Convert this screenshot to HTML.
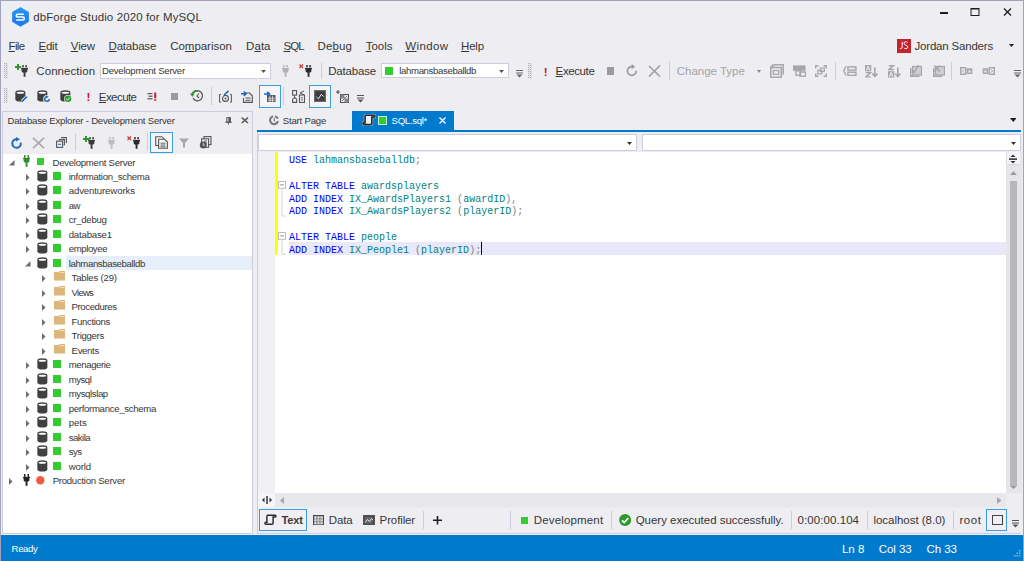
<!DOCTYPE html>
<html><head><meta charset="utf-8"><style>
html,body{margin:0;padding:0;}
body{width:1024px;height:561px;overflow:hidden;background:#EEEEF2;position:relative;font-family:'Liberation Sans',sans-serif;}
.a{position:absolute;display:block;}
.t{position:absolute;white-space:pre;line-height:20px;}
u{text-decoration:underline;text-underline-offset:1px;}
</style></head><body>
<div class="a" style="left:0px;top:0px;width:1024px;height:1px;background:#9FA3BF;"></div>
<div class="a" style="left:0px;top:0px;width:1px;height:561px;background:#9FA3BF;"></div>
<div class="a" style="left:1023px;top:0px;width:1px;height:561px;background:#9FA3BF;"></div>
<svg class="a" style="left:12px;top:7px;" width="18" height="20" viewBox="0 0 18 20"><defs><linearGradient id="lg" x1="0" y1="0" x2="0" y2="1"><stop offset="0" stop-color="#2A95F5"/><stop offset="1" stop-color="#1877EE"/></linearGradient></defs><path d="M8.5 0.6 L16.6 5.2 L16.6 14.6 L8.5 19.3 L0.4 14.6 L0.4 5.2 Z" fill="url(#lg)" stroke="url(#lg)" stroke-width="0.8" stroke-linejoin="round"/><path d="M12 7.3 H5.6 A1.4 1.4 0 0 0 5.6 10.1 H10.9 A1.45 1.45 0 0 1 10.9 13 H4.3" fill="none" stroke="#fff" stroke-width="1.5"/></svg>
<div class="t" style="left:33.20px;top:7px;font-size:11.5px;font-family:'Liberation Sans',sans-serif;color:#363636;letter-spacing:0.108px;">dbForge Studio 2020 for MySQL</div>
<div class="a" style="left:940px;top:12px;width:8px;height:2px;background:#1E1E1E;"></div>
<svg class="a" style="left:970px;top:7px;" width="10" height="10" viewBox="0 0 10 10"><rect x="1" y="1.5" width="8" height="7" fill="none" stroke="#1e1e1e" stroke-width="1"/><rect x="1" y="1" width="8" height="1.5" fill="#1e1e1e"/></svg>
<svg class="a" style="left:1003px;top:8px;" width="9" height="8" viewBox="0 0 9 8"><path d="M1 0.5 L8 7.5 M8 0.5 L1 7.5" stroke="#1e1e1e" stroke-width="1.3"/></svg>
<div class="t" style="left:8.50px;top:36px;font-size:11.5px;font-family:'Liberation Sans',sans-serif;color:#363636;letter-spacing:-0.642px;"><u>F</u>ile</div>
<div class="t" style="left:38.60px;top:36px;font-size:11.5px;font-family:'Liberation Sans',sans-serif;color:#363636;letter-spacing:-0.271px;"><u>E</u>dit</div>
<div class="t" style="left:70.80px;top:36px;font-size:11.5px;font-family:'Liberation Sans',sans-serif;color:#363636;letter-spacing:-0.116px;"><u>V</u>iew</div>
<div class="t" style="left:108.60px;top:36px;font-size:11.5px;font-family:'Liberation Sans',sans-serif;color:#363636;letter-spacing:-0.219px;"><u>D</u>atabase</div>
<div class="t" style="left:170.20px;top:36px;font-size:11.5px;font-family:'Liberation Sans',sans-serif;color:#363636;letter-spacing:-0.033px;">Co<u>m</u>parison</div>
<div class="t" style="left:246.10px;top:36px;font-size:11.5px;font-family:'Liberation Sans',sans-serif;color:#363636;letter-spacing:0.034px;">D<u>a</u>ta</div>
<div class="t" style="left:283.50px;top:36px;font-size:11.5px;font-family:'Liberation Sans',sans-serif;color:#363636;letter-spacing:-0.906px;"><u>S</u>QL</div>
<div class="t" style="left:317.60px;top:36px;font-size:11.5px;font-family:'Liberation Sans',sans-serif;color:#363636;letter-spacing:0.077px;">De<u>b</u>ug</div>
<div class="t" style="left:365.70px;top:36px;font-size:11.5px;font-family:'Liberation Sans',sans-serif;color:#363636;letter-spacing:0.015px;"><u>T</u>ools</div>
<div class="t" style="left:405.30px;top:36px;font-size:11.5px;font-family:'Liberation Sans',sans-serif;color:#363636;letter-spacing:0.354px;"><u>W</u>indow</div>
<div class="t" style="left:461.00px;top:36px;font-size:11.5px;font-family:'Liberation Sans',sans-serif;color:#363636;letter-spacing:-0.185px;"><u>H</u>elp</div>
<div class="a" style="left:897px;top:39px;width:14px;height:14px;background:#C4232C;"></div>
<svg class="a" style="left:899px;top:41px;" width="10" height="9" viewBox="0 0 10 9"><path d="M3.2 0.8 V5.8 Q3.2 7.6 1.4 7.6 H0.8" fill="none" stroke="#fff" stroke-width="1"/><path d="M8.6 1.4 Q7.9 0.8 6.8 0.8 Q5 0.8 5 2.3 Q5 3.6 6.8 4.1 Q8.8 4.6 8.8 6 Q8.8 7.6 6.8 7.6 Q5.5 7.6 4.8 6.9" fill="none" stroke="#fff" stroke-width="1"/></svg>
<div class="t" style="left:914.50px;top:36px;font-size:11.5px;font-family:'Liberation Sans',sans-serif;color:#363636;letter-spacing:-0.192px;">Jordan Sanders</div>
<svg class="a" style="left:1009px;top:44px;" width="6" height="4" viewBox="0 0 6 4"><path d="M0 0 H5 L2.5 3 Z" fill="#1e1e1e"/></svg>
<svg class="a" style="left:4px;top:63px;" width="4" height="16" viewBox="0 0 4 16"><rect x="0" y="0" width="1" height="1" fill="#A9A9B4"/><rect x="2" y="0" width="1" height="1" fill="#A9A9B4"/><rect x="1" y="1" width="1" height="1" fill="#D0D0D8"/><rect x="3" y="1" width="1" height="1" fill="#D0D0D8"/><rect x="0" y="2" width="1" height="1" fill="#A9A9B4"/><rect x="2" y="2" width="1" height="1" fill="#A9A9B4"/><rect x="1" y="3" width="1" height="1" fill="#D0D0D8"/><rect x="3" y="3" width="1" height="1" fill="#D0D0D8"/><rect x="0" y="4" width="1" height="1" fill="#A9A9B4"/><rect x="2" y="4" width="1" height="1" fill="#A9A9B4"/><rect x="1" y="5" width="1" height="1" fill="#D0D0D8"/><rect x="3" y="5" width="1" height="1" fill="#D0D0D8"/><rect x="0" y="6" width="1" height="1" fill="#A9A9B4"/><rect x="2" y="6" width="1" height="1" fill="#A9A9B4"/><rect x="1" y="7" width="1" height="1" fill="#D0D0D8"/><rect x="3" y="7" width="1" height="1" fill="#D0D0D8"/><rect x="0" y="8" width="1" height="1" fill="#A9A9B4"/><rect x="2" y="8" width="1" height="1" fill="#A9A9B4"/><rect x="1" y="9" width="1" height="1" fill="#D0D0D8"/><rect x="3" y="9" width="1" height="1" fill="#D0D0D8"/><rect x="0" y="10" width="1" height="1" fill="#A9A9B4"/><rect x="2" y="10" width="1" height="1" fill="#A9A9B4"/><rect x="1" y="11" width="1" height="1" fill="#D0D0D8"/><rect x="3" y="11" width="1" height="1" fill="#D0D0D8"/><rect x="0" y="12" width="1" height="1" fill="#A9A9B4"/><rect x="2" y="12" width="1" height="1" fill="#A9A9B4"/><rect x="1" y="13" width="1" height="1" fill="#D0D0D8"/><rect x="3" y="13" width="1" height="1" fill="#D0D0D8"/><rect x="0" y="14" width="1" height="1" fill="#A9A9B4"/><rect x="2" y="14" width="1" height="1" fill="#A9A9B4"/><rect x="1" y="15" width="1" height="1" fill="#D0D0D8"/><rect x="3" y="15" width="1" height="1" fill="#D0D0D8"/></svg>
<svg class="a" style="left:15px;top:64px;" width="6" height="6" viewBox="0 0 6 6"><path d="M2 0 H4 V2 H6 V4 H4 V6 H2 V4 H0 V2 H2 Z" fill="#2E9A2E"/></svg>
<svg class="a" style="left:20.5px;top:65px;" width="7" height="12" viewBox="0 0 7 12"><rect x="1.2" y="0" width="1.6" height="2.3" rx="0.6" fill="#3A3A3A"/><rect x="4.3" y="0" width="1.6" height="2.3" rx="0.6" fill="#3A3A3A"/><rect x="0" y="2.9" width="7" height="1.2" fill="#3A3A3A"/><path d="M0.6 4 H6.4 V6.6 L5 7.8 H2 L0.6 6.6 Z" fill="#3A3A3A"/><rect x="2.6" y="7.5" width="1.9" height="4.3" fill="#3A3A3A"/></svg>
<div class="t" style="left:36.30px;top:61px;font-size:11.5px;font-family:'Liberation Sans',sans-serif;color:#363636;letter-spacing:0.069px;">Connection</div>
<div class="a" style="left:100px;top:63px;width:171px;height:16px;background:#FFFFFF;box-sizing:border-box;border:1px solid #CCCEDB;"></div>
<div class="t" style="left:102.00px;top:61px;font-size:9.6px;font-family:'Liberation Sans',sans-serif;color:#363636;letter-spacing:-0.253px;">Development Server</div>
<svg class="a" style="left:260.5px;top:69.5px;" width="5" height="3" viewBox="0 0 5 3"><path d="M0 0 H5 L2.5 3 Z" fill="#555"/></svg>
<svg class="a" style="left:282px;top:65px;" width="7" height="12" viewBox="0 0 7 12"><rect x="1.2" y="0" width="1.6" height="2.3" rx="0.6" fill="#B4B4B4"/><rect x="4.3" y="0" width="1.6" height="2.3" rx="0.6" fill="#B4B4B4"/><rect x="0" y="2.9" width="7" height="1.2" fill="#B4B4B4"/><path d="M0.6 4 H6.4 V6.6 L5 7.8 H2 L0.6 6.6 Z" fill="#B4B4B4"/><rect x="2.6" y="7.5" width="1.9" height="4.3" fill="#B4B4B4"/></svg>
<svg class="a" style="left:299px;top:64px;" width="5" height="5" viewBox="0 0 5 5"><path d="M0.5 0.5 L4 4 M4 0.5 L0.5 4" stroke="#D0302A" stroke-width="1.1"/></svg>
<svg class="a" style="left:305px;top:65px;" width="7" height="12" viewBox="0 0 7 12"><rect x="1.2" y="0" width="1.6" height="2.3" rx="0.6" fill="#2A2A2A"/><rect x="4.3" y="0" width="1.6" height="2.3" rx="0.6" fill="#2A2A2A"/><rect x="0" y="2.9" width="7" height="1.2" fill="#2A2A2A"/><path d="M0.6 4 H6.4 V6.6 L5 7.8 H2 L0.6 6.6 Z" fill="#2A2A2A"/><rect x="2.6" y="7.5" width="1.9" height="4.3" fill="#2A2A2A"/></svg>
<div class="a" style="left:321px;top:63px;width:1px;height:16px;background:#CCCEDB;"></div>
<div class="t" style="left:328.20px;top:61px;font-size:11.5px;font-family:'Liberation Sans',sans-serif;color:#363636;letter-spacing:-0.176px;">Database</div>
<div class="a" style="left:381px;top:63px;width:128px;height:15px;background:#FFFFFF;box-sizing:border-box;border:1px solid #CCCEDB;"></div>
<div class="a" style="left:385px;top:67px;width:8px;height:8px;background:#33CC33;"></div>
<div class="t" style="left:399.20px;top:61px;font-size:9.6px;font-family:'Liberation Sans',sans-serif;color:#363636;letter-spacing:-0.339px;">lahmansbaseballdb</div>
<svg class="a" style="left:499px;top:69.5px;" width="5" height="3" viewBox="0 0 5 3"><path d="M0 0 H5 L2.5 3 Z" fill="#555"/></svg>
<svg class="a" style="left:515.5px;top:69.5px;" width="7" height="8" viewBox="0 0 7 8"><rect x="0" y="0" width="7" height="1" fill="#666"/><rect x="0" y="2.5" width="7" height="1" fill="#666"/><path d="M0.5 4.5 H6.5 L3.5 7.5 Z" fill="#666"/></svg>
<svg class="a" style="left:528px;top:63px;" width="4" height="16" viewBox="0 0 4 16"><rect x="0" y="0" width="1" height="1" fill="#A9A9B4"/><rect x="2" y="0" width="1" height="1" fill="#A9A9B4"/><rect x="1" y="1" width="1" height="1" fill="#D0D0D8"/><rect x="3" y="1" width="1" height="1" fill="#D0D0D8"/><rect x="0" y="2" width="1" height="1" fill="#A9A9B4"/><rect x="2" y="2" width="1" height="1" fill="#A9A9B4"/><rect x="1" y="3" width="1" height="1" fill="#D0D0D8"/><rect x="3" y="3" width="1" height="1" fill="#D0D0D8"/><rect x="0" y="4" width="1" height="1" fill="#A9A9B4"/><rect x="2" y="4" width="1" height="1" fill="#A9A9B4"/><rect x="1" y="5" width="1" height="1" fill="#D0D0D8"/><rect x="3" y="5" width="1" height="1" fill="#D0D0D8"/><rect x="0" y="6" width="1" height="1" fill="#A9A9B4"/><rect x="2" y="6" width="1" height="1" fill="#A9A9B4"/><rect x="1" y="7" width="1" height="1" fill="#D0D0D8"/><rect x="3" y="7" width="1" height="1" fill="#D0D0D8"/><rect x="0" y="8" width="1" height="1" fill="#A9A9B4"/><rect x="2" y="8" width="1" height="1" fill="#A9A9B4"/><rect x="1" y="9" width="1" height="1" fill="#D0D0D8"/><rect x="3" y="9" width="1" height="1" fill="#D0D0D8"/><rect x="0" y="10" width="1" height="1" fill="#A9A9B4"/><rect x="2" y="10" width="1" height="1" fill="#A9A9B4"/><rect x="1" y="11" width="1" height="1" fill="#D0D0D8"/><rect x="3" y="11" width="1" height="1" fill="#D0D0D8"/><rect x="0" y="12" width="1" height="1" fill="#A9A9B4"/><rect x="2" y="12" width="1" height="1" fill="#A9A9B4"/><rect x="1" y="13" width="1" height="1" fill="#D0D0D8"/><rect x="3" y="13" width="1" height="1" fill="#D0D0D8"/><rect x="0" y="14" width="1" height="1" fill="#A9A9B4"/><rect x="2" y="14" width="1" height="1" fill="#A9A9B4"/><rect x="1" y="15" width="1" height="1" fill="#D0D0D8"/><rect x="3" y="15" width="1" height="1" fill="#D0D0D8"/></svg>
<div class="t" style="left:543.80px;top:61.5px;font-size:11.5px;font-family:'Liberation Sans',sans-serif;color:#C8102E;font-weight:bold;">!</div>
<div class="t" style="left:555.60px;top:61px;font-size:11.5px;font-family:'Liberation Sans',sans-serif;color:#363636;letter-spacing:-0.392px;"><u>E</u>xecute</div>
<div class="a" style="left:606.5px;top:67px;width:7.7px;height:7.7px;background:#9B9B9B;"></div>
<svg class="a" style="left:626px;top:64px;" width="13" height="13" viewBox="0 0 13 13"><path d="M10.2 6.8 A4.4 4.4 0 1 1 6.2 2.6" fill="none" stroke="#9B9B9B" stroke-width="1.7"/><path d="M5.6 0 L9.2 2.7 L5.6 5.2 Z" fill="#9B9B9B"/></svg>
<svg class="a" style="left:647.5px;top:65px;" width="13" height="12" viewBox="0 0 13 12"><path d="M1 1 L12 11.5 M12 0.5 L1 11.5" stroke="#A0A0A0" stroke-width="1.6"/></svg>
<div class="a" style="left:668.5px;top:61px;width:1px;height:19px;background:#CCCEDB;"></div>
<div class="t" style="left:676.80px;top:61px;font-size:11.5px;font-family:'Liberation Sans',sans-serif;color:#A2A4A5;letter-spacing:-0.021px;">Change Type</div>
<svg class="a" style="left:756.5px;top:70px;" width="4" height="3" viewBox="0 0 4 3"><path d="M0 0 H4 L2.0 3 Z" fill="#8a8a8a"/></svg>
<svg class="a" style="left:769.5px;top:64px;" width="14" height="14" viewBox="0 0 14 14"><path d="M3.5 0.8 H13.2 V10.5" fill="none" stroke="#A6A6A6" stroke-width="1.5"/><rect x="0.8" y="3.5" width="10.5" height="9.7" fill="none" stroke="#A6A6A6" stroke-width="1.5"/><rect x="3.3" y="6.5" width="5.5" height="3.8" fill="none" stroke="#A6A6A6" stroke-width="1.3"/><path d="M0.5 2.2 H4.5 M2.5 0.2 V4.2" stroke="#A6A6A6" stroke-width="1.3"/></svg>
<svg class="a" style="left:792.5px;top:65px;" width="13" height="12" viewBox="0 0 13 12"><rect x="0" y="0.4" width="12.5" height="5.4" fill="#A6A6A6"/><rect x="3" y="5.8" width="4.5" height="4.5" fill="none" stroke="#A6A6A6" stroke-width="1.3"/><rect x="7" y="7" width="5.5" height="4.2" fill="none" stroke="#A6A6A6" stroke-width="1.4"/></svg>
<svg class="a" style="left:815px;top:65px;" width="12" height="12" viewBox="0 0 12 12"><path d="M0.7 3.5 V0.7 H3.5 M8.5 0.7 H11.3 V3.5 M11.3 8.5 V11.3 H8.5 M3.5 11.3 H0.7 V8.5" fill="none" stroke="#A6A6A6" stroke-width="1.5"/><rect x="2.8" y="5.3" width="4" height="3.5" fill="none" stroke="#A6A6A6" stroke-width="1.2"/><rect x="5.3" y="3" width="4" height="3.5" fill="none" stroke="#A6A6A6" stroke-width="1.2"/></svg>
<div class="a" style="left:834.5px;top:62px;width:1px;height:18px;background:#CCCEDB;"></div>
<svg class="a" style="left:842.5px;top:65.5px;" width="14" height="10" viewBox="0 0 14 10"><path d="M3 0.3 L0.8 4.8 L3 9.5" fill="none" stroke="#A6A6A6" stroke-width="1.4"/><rect x="4.9" y="0.9" width="8" height="3.2" fill="none" stroke="#A6A6A6" stroke-width="1.4"/><rect x="4.9" y="6.2" width="8" height="3.2" fill="none" stroke="#A6A6A6" stroke-width="1.4"/></svg>
<svg class="a" style="left:865px;top:64.5px;" width="13" height="13" viewBox="0 0 13 13"><rect x="0" y="0" width="6.3" height="6.3" fill="#A6A6A6"/><path d="M1.3 5.6 L3.15 0.9 L5 5.6 M2 4 H4.3" fill="none" stroke="#eee" stroke-width="0.9"/><path d="M0.8 7.6 H5.5 L0.8 11.9 H5.8" fill="none" stroke="#A6A6A6" stroke-width="1.4"/><path d="M9.8 2.5 V11.5 M7.3 8.6 L9.8 11.5 L12.4 8.6" fill="none" stroke="#A6A6A6" stroke-width="1.6"/></svg>
<svg class="a" style="left:887.5px;top:64.5px;" width="13" height="13" viewBox="0 0 13 13"><path d="M0.8 0.7 H5.5 L0.8 4.5 H5.8" fill="none" stroke="#A6A6A6" stroke-width="1.4"/><rect x="0" y="6.2" width="6.3" height="6.3" fill="#A6A6A6"/><path d="M1.3 11.8 L3.15 7.1 L5 11.8 M2 10.2 H4.3" fill="none" stroke="#eee" stroke-width="0.9"/><path d="M9.8 2.5 V11.5 M7.3 8.6 L9.8 11.5 L12.4 8.6" fill="none" stroke="#A6A6A6" stroke-width="1.6"/></svg>
<svg class="a" style="left:909.5px;top:64.5px;" width="12" height="12" viewBox="0 0 12 12"><rect x="2.5" y="1.5" width="9" height="8.5" fill="#CFCFCF" stroke="#A6A6A6" stroke-width="1.2"/><path d="M0.7 3 V11.3 H9.5" fill="none" stroke="#A6A6A6" stroke-width="1.4"/><path d="M2 4.5 L4.3 7.5 L8.5 0" fill="none" stroke="#A6A6A6" stroke-width="1.3"/></svg>
<svg class="a" style="left:932.5px;top:64.5px;" width="12" height="12" viewBox="0 0 12 12"><rect x="2.5" y="1.5" width="9" height="8.5" fill="#CFCFCF" stroke="#A6A6A6" stroke-width="1.2"/><path d="M0.7 3 V11.3 H9.5" fill="none" stroke="#A6A6A6" stroke-width="1.4"/><path d="M1 0.5 L7 6.5 M7 0.5 L1 6.5" fill="none" stroke="#A6A6A6" stroke-width="1.1"/></svg>
<div class="a" style="left:951px;top:62px;width:1px;height:18px;background:#CCCEDB;"></div>
<svg class="a" style="left:959.5px;top:66.5px;" width="13" height="8" viewBox="0 0 13 8"><rect x="0.7" y="0.7" width="5" height="6.6" fill="none" stroke="#A6A6A6" stroke-width="1.4"/><path d="M4 2.3 L2.5 4 L4 5.7" fill="none" stroke="#A6A6A6" stroke-width="1"/><rect x="6.8" y="1.3" width="5.5" height="5.7" fill="#A6A6A6"/><rect x="8.3" y="3.5" width="2.5" height="2" fill="#e8e8e8"/></svg>
<svg class="a" style="left:981.5px;top:66.5px;" width="13" height="8" viewBox="0 0 13 8"><rect x="7.3" y="0.7" width="5" height="6.6" fill="none" stroke="#A6A6A6" stroke-width="1.4"/><path d="M9 2.3 L10.5 4 L9 5.7" fill="none" stroke="#A6A6A6" stroke-width="1"/><rect x="0.7" y="1.3" width="5.5" height="5.7" fill="#A6A6A6"/><rect x="2.2" y="3.5" width="2.5" height="2" fill="#e8e8e8"/></svg>
<svg class="a" style="left:1014px;top:70px;" width="7" height="8" viewBox="0 0 7 8"><rect x="0" y="0" width="7" height="1" fill="#666"/><rect x="0" y="2.5" width="7" height="1" fill="#666"/><path d="M0.5 4.5 H6.5 L3.5 7.5 Z" fill="#666"/></svg>
<svg class="a" style="left:4px;top:88px;" width="4" height="15" viewBox="0 0 4 15"><rect x="0" y="0" width="1" height="1" fill="#A9A9B4"/><rect x="2" y="0" width="1" height="1" fill="#A9A9B4"/><rect x="1" y="1" width="1" height="1" fill="#D0D0D8"/><rect x="3" y="1" width="1" height="1" fill="#D0D0D8"/><rect x="0" y="2" width="1" height="1" fill="#A9A9B4"/><rect x="2" y="2" width="1" height="1" fill="#A9A9B4"/><rect x="1" y="3" width="1" height="1" fill="#D0D0D8"/><rect x="3" y="3" width="1" height="1" fill="#D0D0D8"/><rect x="0" y="4" width="1" height="1" fill="#A9A9B4"/><rect x="2" y="4" width="1" height="1" fill="#A9A9B4"/><rect x="1" y="5" width="1" height="1" fill="#D0D0D8"/><rect x="3" y="5" width="1" height="1" fill="#D0D0D8"/><rect x="0" y="6" width="1" height="1" fill="#A9A9B4"/><rect x="2" y="6" width="1" height="1" fill="#A9A9B4"/><rect x="1" y="7" width="1" height="1" fill="#D0D0D8"/><rect x="3" y="7" width="1" height="1" fill="#D0D0D8"/><rect x="0" y="8" width="1" height="1" fill="#A9A9B4"/><rect x="2" y="8" width="1" height="1" fill="#A9A9B4"/><rect x="1" y="9" width="1" height="1" fill="#D0D0D8"/><rect x="3" y="9" width="1" height="1" fill="#D0D0D8"/><rect x="0" y="10" width="1" height="1" fill="#A9A9B4"/><rect x="2" y="10" width="1" height="1" fill="#A9A9B4"/><rect x="1" y="11" width="1" height="1" fill="#D0D0D8"/><rect x="3" y="11" width="1" height="1" fill="#D0D0D8"/><rect x="0" y="12" width="1" height="1" fill="#A9A9B4"/><rect x="2" y="12" width="1" height="1" fill="#A9A9B4"/><rect x="1" y="13" width="1" height="1" fill="#D0D0D8"/><rect x="3" y="13" width="1" height="1" fill="#D0D0D8"/><rect x="0" y="14" width="1" height="1" fill="#A9A9B4"/><rect x="2" y="14" width="1" height="1" fill="#A9A9B4"/><rect x="1" y="15" width="1" height="1" fill="#D0D0D8"/><rect x="3" y="15" width="1" height="1" fill="#D0D0D8"/></svg>
<svg class="a" style="left:15px;top:90px;" width="11" height="13" viewBox="0 0 11 13"><path d="M0.35 2.6 A5 2.3 0 0 1 10.35 2.6 V9.3 A5 2.3 0 0 1 0.35 9.3 Z" fill="#404040"/><ellipse cx="5.35" cy="2.75" rx="3.75" ry="1.05" fill="#fff"/></svg>
<svg class="a" style="left:20px;top:95px;" width="8" height="8" viewBox="0 0 8 8"><path d="M2 6.5 L6.5 2" stroke="#fff" stroke-width="3.2"/><path d="M1.8 6.7 L6.8 1.7" stroke="#1F66BD" stroke-width="1.8"/></svg>
<svg class="a" style="left:37.3px;top:90px;" width="11" height="13" viewBox="0 0 11 13"><path d="M0.35 2.6 A5 2.3 0 0 1 10.35 2.6 V9.3 A5 2.3 0 0 1 0.35 9.3 Z" fill="#404040"/><ellipse cx="5.35" cy="2.75" rx="3.75" ry="1.05" fill="#fff"/></svg>
<svg class="a" style="left:42.5px;top:94.8px;" width="8" height="8" viewBox="0 0 8 8"><circle cx="4" cy="3.9" r="3.8" fill="#EEEEF2"/><path d="M6.3 4 A2.3 2.3 0 1 1 4 1.7" fill="none" stroke="#1F66BD" stroke-width="1.4"/><path d="M3.3 0.2 L5.6 1.7 L3.3 3.2 Z" fill="#1F66BD"/></svg>
<svg class="a" style="left:59.6px;top:90px;" width="11" height="13" viewBox="0 0 11 13"><path d="M0.35 2.6 A5 2.3 0 0 1 10.35 2.6 V9.3 A5 2.3 0 0 1 0.35 9.3 Z" fill="#404040"/><ellipse cx="5.35" cy="2.75" rx="3.75" ry="1.05" fill="#fff"/></svg>
<svg class="a" style="left:64.3px;top:94.6px;" width="8" height="8" viewBox="0 0 8 8"><circle cx="4" cy="3.8" r="3.9" fill="#EEEEF2"/><circle cx="4" cy="3.8" r="3.3" fill="#2E9A2E"/><path d="M2.3 3.9 L3.6 5.1 L5.8 2.6" fill="none" stroke="#fff" stroke-width="1"/></svg>
<div class="t" style="left:86.60px;top:86.5px;font-size:11.5px;font-family:'Liberation Sans',sans-serif;color:#C8102E;font-weight:bold;">!</div>
<div class="t" style="left:98.80px;top:86.5px;font-size:11.5px;font-family:'Liberation Sans',sans-serif;color:#363636;letter-spacing:-0.558px;"><u>E</u>xecute</div>
<svg class="a" style="left:147px;top:91.5px;" width="10" height="9" viewBox="0 0 10 9"><rect x="0.5" y="1.2" width="5" height="1" fill="#3a3a3a"/><rect x="1.5" y="3.7" width="4" height="1" fill="#3a3a3a"/><rect x="0.5" y="6.3" width="5" height="1" fill="#3a3a3a"/><rect x="7.3" y="0.5" width="1.9" height="5.7" fill="#C8102E"/><rect x="7.3" y="7.2" width="1.9" height="1.6" fill="#C8102E"/></svg>
<div class="a" style="left:171.2px;top:93px;width:7.3px;height:7px;background:#9B9B9B;"></div>
<svg class="a" style="left:190px;top:90px;" width="14" height="12" viewBox="0 0 14 12"><path d="M3.2 3.2 A5 5 0 1 1 3 8" fill="none" stroke="#555" stroke-width="1.2"/><path d="M9 3.5 L7 6 L9 8" fill="none" stroke="#555" stroke-width="1.1"/><path d="M8 0.9 A5 5 0 0 0 2 4.5" fill="none" stroke="#2E9A2E" stroke-width="1.8"/><path d="M0 3.5 L4.8 3.5 L2.4 7 Z" fill="#2E9A2E"/></svg>
<div class="a" style="left:211px;top:87px;width:1px;height:18px;background:#CCCEDB;"></div>
<svg class="a" style="left:218.5px;top:90px;" width="13" height="13" viewBox="0 0 13 13"><path d="M2 4.5 H0.6 V12.2 H2 M11 4.5 H12.4 V12.2 H11" fill="none" stroke="#555" stroke-width="1"/><circle cx="6.5" cy="8.4" r="3" fill="none" stroke="#555" stroke-width="1.1"/><circle cx="6.5" cy="8.4" r="1" fill="#555"/><path d="M5 5 L9.5 0.8" stroke="#1F66BD" stroke-width="1.6"/></svg>
<svg class="a" style="left:241px;top:90px;" width="12" height="13" viewBox="0 0 12 13"><path d="M4 3 H8.5 L11.3 5.8 V12.4 H2.5 V8" fill="none" stroke="#555" stroke-width="1.1"/><rect x="4.5" y="7.5" width="5" height="1" fill="#555"/><rect x="4.5" y="9.8" width="5" height="1" fill="#555"/><path d="M0 3.8 H4.5 M2.8 1.5 L5 3.8 L2.8 6" fill="none" stroke="#1F66BD" stroke-width="1.6"/></svg>
<div class="a" style="left:258.5px;top:85px;width:22.5px;height:22.5px;background:#F5F5F7;box-sizing:border-box;border:1px solid #3D9BE0;"></div>
<svg class="a" style="left:264px;top:90.5px;" width="12" height="11.5" viewBox="0 0 12 11.5"><rect x="3" y="4" width="8.5" height="7.3" fill="#555"/><path d="M3.8 7.2 H10.8 M3.8 9.2 H10.8 M6 4.6 V11 M8.6 4.6 V11" stroke="#fff" stroke-width="0.7"/><path d="M0 3 H5 M3.2 0.8 L5.5 3 L3.2 5.2" fill="none" stroke="#1F66BD" stroke-width="1.7"/></svg>
<div class="a" style="left:283.3px;top:87px;width:1px;height:18px;background:#CCCEDB;"></div>
<svg class="a" style="left:291.5px;top:89.5px;" width="13" height="13" viewBox="0 0 13 13"><rect x="0.6" y="0.6" width="4" height="4.5" fill="none" stroke="#555" stroke-width="1.1"/><path d="M0.6 12.4 V9.2 L2.6 7.5 L4.6 9.2 V12.4 Z" fill="none" stroke="#555" stroke-width="1.1"/><rect x="2.2" y="5" width="0.9" height="2.4" fill="#555"/><path d="M12 1 L8 3 L12 4.8" fill="none" stroke="#555" stroke-width="1"/><rect x="7.5" y="5" width="5" height="7.5" fill="none" stroke="#555" stroke-width="1.1"/><rect x="9" y="7.3" width="2" height="0.9" fill="#555"/><rect x="9" y="9.5" width="2" height="0.9" fill="#555"/></svg>
<div class="a" style="left:308.9px;top:85px;width:22.5px;height:22.5px;background:#F5F5F7;box-sizing:border-box;border:1px solid #3D9BE0;"></div>
<svg class="a" style="left:314px;top:90px;" width="12" height="12" viewBox="0 0 12 12"><rect x="0.6" y="0.6" width="10.8" height="10.8" fill="#3D3D3D" stroke="#6a6a6a" stroke-width="1.2"/><path d="M2.5 7 L4.5 8.8 L7.3 4.3 L9.5 6.5" fill="none" stroke="#eee" stroke-width="1"/></svg>
<svg class="a" style="left:335.5px;top:89.5px;" width="13" height="13" viewBox="0 0 13 13"><path d="M2 0 V4 M0 2 H4" stroke="#3a3a3a" stroke-width="0.9"/><rect x="4.5" y="4.5" width="8" height="8" fill="none" stroke="#555" stroke-width="1.1"/><rect x="4.5" y="4.5" width="4" height="4" fill="#888"/><rect x="8.5" y="8.5" width="4" height="4" fill="#888"/><path d="M6 11 L11 6" stroke="#555" stroke-width="0.8"/></svg>
<svg class="a" style="left:357px;top:95px;" width="7" height="8" viewBox="0 0 7 8"><rect x="0" y="0" width="7" height="1" fill="#555"/><rect x="0" y="2.5" width="7" height="1" fill="#555"/><path d="M0.5 4.5 H6.5 L3.5 7.5 Z" fill="#555"/></svg>
<div class="a" style="left:2px;top:111px;width:251px;height:423px;background:#EEEEF2;box-sizing:border-box;border:1px solid #CCCEDB;"></div>
<div class="a" style="left:3px;top:154px;width:249px;height:379px;background:#FFFFFF;"></div>
<div class="t" style="left:7.50px;top:110.5px;font-size:9.6px;font-family:'Liberation Sans',sans-serif;color:#363636;letter-spacing:-0.217px;">Database Explorer - Development Server</div>
<svg class="a" style="left:225px;top:116.5px;" width="7" height="8" viewBox="0 0 7 8"><rect x="1.8" y="0.7" width="3.5" height="4.2" fill="none" stroke="#555" stroke-width="1"/><rect x="3.4" y="0.5" width="2.2" height="4.4" fill="#555"/><rect x="0.3" y="4.7" width="6.4" height="1.1" fill="#555"/><rect x="3" y="5.6" width="1" height="1.9" fill="#555"/></svg>
<svg class="a" style="left:240.8px;top:116.7px;" width="8" height="7" viewBox="0 0 8 7"><path d="M0.7 0.6 L7 6 M7 0.6 L0.7 6" stroke="#5A5A5A" stroke-width="1.5"/></svg>
<svg class="a" style="left:10.5px;top:136.5px;" width="12" height="12" viewBox="0 0 12 12"><path d="M9.8 5.2 A4.3 4.3 0 1 1 6 1.7" fill="none" stroke="#1F66BD" stroke-width="1.9" transform="translate(0,0.5)"/><path d="M5 0 L9 2.3 L5 4.6 Z" fill="#1F66BD"/></svg>
<svg class="a" style="left:32px;top:137px;" width="13" height="12" viewBox="0 0 13 12"><path d="M1 0.8 L12 11.2 M12 0.8 L1 11.2" stroke="#A8A8A8" stroke-width="1.6"/></svg>
<svg class="a" style="left:55.5px;top:136.5px;" width="11" height="11" viewBox="0 0 11 11"><path d="M5.6 1.2 V0.6 H10.4 V5.4 H9.8" fill="none" stroke="#555" stroke-width="1.1"/><path d="M3.4 3.4 V2.6 H8.4 V7.6 H7.6" fill="none" stroke="#555" stroke-width="1.1"/><rect x="0.6" y="4.2" width="6" height="6.2" fill="#EEEEF2" stroke="#555" stroke-width="1.1"/><rect x="2.1" y="6.8" width="3" height="1" fill="#1F63B5"/></svg>
<div class="a" style="left:74.5px;top:133px;width:1px;height:18px;background:#CCCEDB;"></div>
<svg class="a" style="left:82.5px;top:136px;" width="6" height="6" viewBox="0 0 6 6"><path d="M2 0 H4 V2 H6 V4 H4 V6 H2 V4 H0 V2 H2 Z" fill="#2E9A2E"/></svg>
<svg class="a" style="left:88px;top:137px;" width="7" height="12" viewBox="0 0 7 12"><rect x="1.2" y="0" width="1.6" height="2.3" rx="0.6" fill="#3A3A3A"/><rect x="4.3" y="0" width="1.6" height="2.3" rx="0.6" fill="#3A3A3A"/><rect x="0" y="2.9" width="7" height="1.2" fill="#3A3A3A"/><path d="M0.6 4 H6.4 V6.6 L5 7.8 H2 L0.6 6.6 Z" fill="#3A3A3A"/><rect x="2.6" y="7.5" width="1.9" height="4.3" fill="#3A3A3A"/></svg>
<svg class="a" style="left:107.5px;top:137px;" width="7" height="12" viewBox="0 0 7 12"><rect x="1.2" y="0" width="1.6" height="2.3" rx="0.6" fill="#BDBDBD"/><rect x="4.3" y="0" width="1.6" height="2.3" rx="0.6" fill="#BDBDBD"/><rect x="0" y="2.9" width="7" height="1.2" fill="#BDBDBD"/><path d="M0.6 4 H6.4 V6.6 L5 7.8 H2 L0.6 6.6 Z" fill="#BDBDBD"/><rect x="2.6" y="7.5" width="1.9" height="4.3" fill="#BDBDBD"/></svg>
<svg class="a" style="left:127px;top:136px;" width="5" height="5" viewBox="0 0 5 5"><path d="M0.5 0.5 L4 4 M4 0.5 L0.5 4" stroke="#D0302A" stroke-width="1.1"/></svg>
<svg class="a" style="left:132.5px;top:137px;" width="7" height="12" viewBox="0 0 7 12"><rect x="1.2" y="0" width="1.6" height="2.3" rx="0.6" fill="#2A2A2A"/><rect x="4.3" y="0" width="1.6" height="2.3" rx="0.6" fill="#2A2A2A"/><rect x="0" y="2.9" width="7" height="1.2" fill="#2A2A2A"/><path d="M0.6 4 H6.4 V6.6 L5 7.8 H2 L0.6 6.6 Z" fill="#2A2A2A"/><rect x="2.6" y="7.5" width="1.9" height="4.3" fill="#2A2A2A"/></svg>
<div class="a" style="left:147px;top:133px;width:1px;height:18px;background:#CCCEDB;"></div>
<div class="a" style="left:150px;top:132px;width:22.5px;height:21px;background:#F5F5F7;box-sizing:border-box;border:1px solid #3D9BE0;"></div>
<svg class="a" style="left:154.5px;top:136px;" width="14" height="13" viewBox="0 0 14 13"><path d="M3 9.5 H0.7 V0.7 H6.8 L8.8 2.7 V3.2" fill="none" stroke="#555" stroke-width="1.1"/><path d="M3.6 3.3 H9.6 L12.4 6.1 V12.3 H3.6 Z" fill="#F5F5F7" stroke="#555" stroke-width="1.1"/><path d="M5.5 7.2 H10.5 M5.5 9 H10.5 M5.5 10.8 H10.5" stroke="#555" stroke-width="0.9"/></svg>
<svg class="a" style="left:178.5px;top:138px;" width="10" height="10" viewBox="0 0 10 10"><path d="M0 0.5 H10 L6 5 V9.5 L4 9.5 V5 Z" fill="#A8A8A8"/></svg>
<svg class="a" style="left:198.5px;top:136px;" width="14" height="13" viewBox="0 0 14 13"><rect x="5" y="0.6" width="7" height="8" fill="none" stroke="#555" stroke-width="1.1"/><rect x="2.6" y="2.8" width="7" height="8.5" fill="#EEEEF2" stroke="#555" stroke-width="1.1"/><circle cx="4.3" cy="9" r="3.5" fill="#555"/><path d="M4.3 7 V9.2 H6" fill="none" stroke="#eee" stroke-width="0.8"/><path d="M5 5 H8 M5 7 H8" stroke="#555" stroke-width="0.9"/></svg>
<div class="a" style="left:65.9px;top:256px;width:186.1px;height:14px;background:#E6EEF9;"></div>
<svg class="a" style="left:8.6px;top:159.5px;" width="6" height="6" viewBox="0 0 6 6"><path d="M5.5 0 V5.5 H0 Z" fill="#6E6E6E"/></svg>
<svg class="a" style="left:23px;top:155px;" width="7" height="12" viewBox="0 0 7 12"><rect x="1" y="0" width="1.5" height="2.8" fill="#2E8B2E"/><rect x="4.5" y="0" width="1.5" height="2.8" fill="#2E8B2E"/><rect x="0" y="2.8" width="7" height="1.2" fill="#2E8B2E"/><path d="M0.6 4 H6.4 V6.6 L5 7.8 H2 L0.6 6.6 Z" fill="#2E8B2E"/><rect x="2.6" y="7.5" width="1.9" height="4.3" fill="#2E8B2E"/></svg>
<div class="a" style="left:36.7px;top:157.7px;width:7.7px;height:7.5px;background:#33CC33;"></div>
<div class="t" style="left:52.50px;top:153px;font-size:9.6px;font-family:'Liberation Sans',sans-serif;color:#363636;letter-spacing:-0.265px;">Development Server</div>
<svg class="a" style="left:25.5px;top:173.5px;" width="4" height="7" viewBox="0 0 4 7"><path d="M0 0 L3.5 3.5 L0 7 Z" fill="#6E6E6E"/></svg>
<svg class="a" style="left:37.4px;top:169.6px;" width="11" height="13" viewBox="0 0 11 13"><path d="M0.35 2.6 A5 2.3 0 0 1 10.35 2.6 V9.3 A5 2.3 0 0 1 0.35 9.3 Z" fill="#404040"/><ellipse cx="5.35" cy="2.75" rx="3.75" ry="1.05" fill="#fff"/></svg>
<div class="a" style="left:52.9px;top:172px;width:8px;height:8px;background:#33CC33;"></div>
<div class="t" style="left:68.70px;top:167px;font-size:9.6px;font-family:'Liberation Sans',sans-serif;color:#363636;letter-spacing:-0.315px;">information_schema</div>
<svg class="a" style="left:25.5px;top:187.5px;" width="4" height="7" viewBox="0 0 4 7"><path d="M0 0 L3.5 3.5 L0 7 Z" fill="#6E6E6E"/></svg>
<svg class="a" style="left:37.4px;top:183.6px;" width="11" height="13" viewBox="0 0 11 13"><path d="M0.35 2.6 A5 2.3 0 0 1 10.35 2.6 V9.3 A5 2.3 0 0 1 0.35 9.3 Z" fill="#404040"/><ellipse cx="5.35" cy="2.75" rx="3.75" ry="1.05" fill="#fff"/></svg>
<div class="a" style="left:52.9px;top:186px;width:8px;height:8px;background:#33CC33;"></div>
<div class="t" style="left:68.70px;top:181px;font-size:9.6px;font-family:'Liberation Sans',sans-serif;color:#363636;letter-spacing:-0.113px;">adventureworks</div>
<svg class="a" style="left:25.5px;top:202.5px;" width="4" height="7" viewBox="0 0 4 7"><path d="M0 0 L3.5 3.5 L0 7 Z" fill="#6E6E6E"/></svg>
<svg class="a" style="left:37.4px;top:198.6px;" width="11" height="13" viewBox="0 0 11 13"><path d="M0.35 2.6 A5 2.3 0 0 1 10.35 2.6 V9.3 A5 2.3 0 0 1 0.35 9.3 Z" fill="#404040"/><ellipse cx="5.35" cy="2.75" rx="3.75" ry="1.05" fill="#fff"/></svg>
<div class="a" style="left:52.9px;top:201px;width:8px;height:8px;background:#33CC33;"></div>
<div class="t" style="left:68.70px;top:196px;font-size:9.6px;font-family:'Liberation Sans',sans-serif;color:#363636;letter-spacing:-0.598px;">aw</div>
<svg class="a" style="left:25.5px;top:216.5px;" width="4" height="7" viewBox="0 0 4 7"><path d="M0 0 L3.5 3.5 L0 7 Z" fill="#6E6E6E"/></svg>
<svg class="a" style="left:37.4px;top:212.6px;" width="11" height="13" viewBox="0 0 11 13"><path d="M0.35 2.6 A5 2.3 0 0 1 10.35 2.6 V9.3 A5 2.3 0 0 1 0.35 9.3 Z" fill="#404040"/><ellipse cx="5.35" cy="2.75" rx="3.75" ry="1.05" fill="#fff"/></svg>
<div class="a" style="left:52.9px;top:215px;width:8px;height:8px;background:#33CC33;"></div>
<div class="t" style="left:68.70px;top:210px;font-size:9.6px;font-family:'Liberation Sans',sans-serif;color:#363636;letter-spacing:-0.262px;">cr_debug</div>
<svg class="a" style="left:25.5px;top:231.5px;" width="4" height="7" viewBox="0 0 4 7"><path d="M0 0 L3.5 3.5 L0 7 Z" fill="#6E6E6E"/></svg>
<svg class="a" style="left:37.4px;top:227.6px;" width="11" height="13" viewBox="0 0 11 13"><path d="M0.35 2.6 A5 2.3 0 0 1 10.35 2.6 V9.3 A5 2.3 0 0 1 0.35 9.3 Z" fill="#404040"/><ellipse cx="5.35" cy="2.75" rx="3.75" ry="1.05" fill="#fff"/></svg>
<div class="a" style="left:52.9px;top:230px;width:8px;height:8px;background:#33CC33;"></div>
<div class="t" style="left:68.70px;top:225px;font-size:9.6px;font-family:'Liberation Sans',sans-serif;color:#363636;letter-spacing:-0.180px;">database1</div>
<svg class="a" style="left:25.5px;top:245.5px;" width="4" height="7" viewBox="0 0 4 7"><path d="M0 0 L3.5 3.5 L0 7 Z" fill="#6E6E6E"/></svg>
<svg class="a" style="left:37.4px;top:241.6px;" width="11" height="13" viewBox="0 0 11 13"><path d="M0.35 2.6 A5 2.3 0 0 1 10.35 2.6 V9.3 A5 2.3 0 0 1 0.35 9.3 Z" fill="#404040"/><ellipse cx="5.35" cy="2.75" rx="3.75" ry="1.05" fill="#fff"/></svg>
<div class="a" style="left:52.9px;top:244px;width:8px;height:8px;background:#33CC33;"></div>
<div class="t" style="left:68.70px;top:239px;font-size:9.6px;font-family:'Liberation Sans',sans-serif;color:#363636;letter-spacing:-0.389px;">employee</div>
<svg class="a" style="left:24.5px;top:260.7px;" width="6" height="6" viewBox="0 0 6 6"><path d="M5.5 0 V5.5 H0 Z" fill="#6E6E6E"/></svg>
<svg class="a" style="left:37.4px;top:256.6px;" width="11" height="13" viewBox="0 0 11 13"><path d="M0.35 2.6 A5 2.3 0 0 1 10.35 2.6 V9.3 A5 2.3 0 0 1 0.35 9.3 Z" fill="#404040"/><ellipse cx="5.35" cy="2.75" rx="3.75" ry="1.05" fill="#fff"/></svg>
<div class="a" style="left:52.9px;top:259px;width:8px;height:8px;background:#33CC33;"></div>
<div class="t" style="left:68.70px;top:254px;font-size:9.6px;font-family:'Liberation Sans',sans-serif;color:#363636;letter-spacing:-0.383px;">lahmansbaseballdb</div>
<svg class="a" style="left:41.8px;top:274.7px;" width="4" height="7" viewBox="0 0 4 7"><path d="M0 0 L3.5 3.5 L0 7 Z" fill="#6E6E6E"/></svg>
<svg class="a" style="left:53.7px;top:271px;" width="11" height="10" viewBox="0 0 11 10"><path d="M0 1 H4.5 L5.5 0 H11 V9.5 H0 Z" fill="#DCB67A"/><rect x="5.5" y="1" width="5" height="0.9" fill="#F5E3C0"/></svg>
<div class="t" style="left:71.60px;top:268px;font-size:9.6px;font-family:'Liberation Sans',sans-serif;color:#363636;letter-spacing:-0.209px;">Tables (29)</div>
<svg class="a" style="left:41.8px;top:289.7px;" width="4" height="7" viewBox="0 0 4 7"><path d="M0 0 L3.5 3.5 L0 7 Z" fill="#6E6E6E"/></svg>
<svg class="a" style="left:53.7px;top:286px;" width="11" height="10" viewBox="0 0 11 10"><path d="M0 1 H4.5 L5.5 0 H11 V9.5 H0 Z" fill="#DCB67A"/><rect x="5.5" y="1" width="5" height="0.9" fill="#F5E3C0"/></svg>
<div class="t" style="left:71.60px;top:283px;font-size:9.6px;font-family:'Liberation Sans',sans-serif;color:#363636;letter-spacing:-0.783px;">Views</div>
<svg class="a" style="left:41.8px;top:303.7px;" width="4" height="7" viewBox="0 0 4 7"><path d="M0 0 L3.5 3.5 L0 7 Z" fill="#6E6E6E"/></svg>
<svg class="a" style="left:53.7px;top:300px;" width="11" height="10" viewBox="0 0 11 10"><path d="M0 1 H4.5 L5.5 0 H11 V9.5 H0 Z" fill="#DCB67A"/><rect x="5.5" y="1" width="5" height="0.9" fill="#F5E3C0"/></svg>
<div class="t" style="left:71.60px;top:297px;font-size:9.6px;font-family:'Liberation Sans',sans-serif;color:#363636;letter-spacing:-0.410px;">Procedures</div>
<svg class="a" style="left:41.8px;top:318.7px;" width="4" height="7" viewBox="0 0 4 7"><path d="M0 0 L3.5 3.5 L0 7 Z" fill="#6E6E6E"/></svg>
<svg class="a" style="left:53.7px;top:315px;" width="11" height="10" viewBox="0 0 11 10"><path d="M0 1 H4.5 L5.5 0 H11 V9.5 H0 Z" fill="#DCB67A"/><rect x="5.5" y="1" width="5" height="0.9" fill="#F5E3C0"/></svg>
<div class="t" style="left:71.60px;top:312px;font-size:9.6px;font-family:'Liberation Sans',sans-serif;color:#363636;letter-spacing:-0.352px;">Functions</div>
<svg class="a" style="left:41.8px;top:332.7px;" width="4" height="7" viewBox="0 0 4 7"><path d="M0 0 L3.5 3.5 L0 7 Z" fill="#6E6E6E"/></svg>
<svg class="a" style="left:53.7px;top:329px;" width="11" height="10" viewBox="0 0 11 10"><path d="M0 1 H4.5 L5.5 0 H11 V9.5 H0 Z" fill="#DCB67A"/><rect x="5.5" y="1" width="5" height="0.9" fill="#F5E3C0"/></svg>
<div class="t" style="left:71.60px;top:326px;font-size:9.6px;font-family:'Liberation Sans',sans-serif;color:#363636;letter-spacing:-0.321px;">Triggers</div>
<svg class="a" style="left:41.8px;top:347.7px;" width="4" height="7" viewBox="0 0 4 7"><path d="M0 0 L3.5 3.5 L0 7 Z" fill="#6E6E6E"/></svg>
<svg class="a" style="left:53.7px;top:344px;" width="11" height="10" viewBox="0 0 11 10"><path d="M0 1 H4.5 L5.5 0 H11 V9.5 H0 Z" fill="#DCB67A"/><rect x="5.5" y="1" width="5" height="0.9" fill="#F5E3C0"/></svg>
<div class="t" style="left:71.60px;top:341px;font-size:9.6px;font-family:'Liberation Sans',sans-serif;color:#363636;letter-spacing:-0.349px;">Events</div>
<svg class="a" style="left:25.5px;top:361.5px;" width="4" height="7" viewBox="0 0 4 7"><path d="M0 0 L3.5 3.5 L0 7 Z" fill="#6E6E6E"/></svg>
<svg class="a" style="left:37.4px;top:357.6px;" width="11" height="13" viewBox="0 0 11 13"><path d="M0.35 2.6 A5 2.3 0 0 1 10.35 2.6 V9.3 A5 2.3 0 0 1 0.35 9.3 Z" fill="#404040"/><ellipse cx="5.35" cy="2.75" rx="3.75" ry="1.05" fill="#fff"/></svg>
<div class="a" style="left:52.9px;top:360px;width:8px;height:8px;background:#33CC33;"></div>
<div class="t" style="left:68.70px;top:355px;font-size:9.6px;font-family:'Liberation Sans',sans-serif;color:#363636;letter-spacing:-0.383px;">menagerie</div>
<svg class="a" style="left:25.5px;top:376.5px;" width="4" height="7" viewBox="0 0 4 7"><path d="M0 0 L3.5 3.5 L0 7 Z" fill="#6E6E6E"/></svg>
<svg class="a" style="left:37.4px;top:372.6px;" width="11" height="13" viewBox="0 0 11 13"><path d="M0.35 2.6 A5 2.3 0 0 1 10.35 2.6 V9.3 A5 2.3 0 0 1 0.35 9.3 Z" fill="#404040"/><ellipse cx="5.35" cy="2.75" rx="3.75" ry="1.05" fill="#fff"/></svg>
<div class="a" style="left:52.9px;top:375px;width:8px;height:8px;background:#33CC33;"></div>
<div class="t" style="left:68.70px;top:370px;font-size:9.6px;font-family:'Liberation Sans',sans-serif;color:#363636;letter-spacing:-0.491px;">mysql</div>
<svg class="a" style="left:25.5px;top:390.5px;" width="4" height="7" viewBox="0 0 4 7"><path d="M0 0 L3.5 3.5 L0 7 Z" fill="#6E6E6E"/></svg>
<svg class="a" style="left:37.4px;top:386.6px;" width="11" height="13" viewBox="0 0 11 13"><path d="M0.35 2.6 A5 2.3 0 0 1 10.35 2.6 V9.3 A5 2.3 0 0 1 0.35 9.3 Z" fill="#404040"/><ellipse cx="5.35" cy="2.75" rx="3.75" ry="1.05" fill="#fff"/></svg>
<div class="a" style="left:52.9px;top:389px;width:8px;height:8px;background:#33CC33;"></div>
<div class="t" style="left:68.70px;top:384px;font-size:9.6px;font-family:'Liberation Sans',sans-serif;color:#363636;letter-spacing:-0.398px;">mysqlslap</div>
<svg class="a" style="left:25.5px;top:405.5px;" width="4" height="7" viewBox="0 0 4 7"><path d="M0 0 L3.5 3.5 L0 7 Z" fill="#6E6E6E"/></svg>
<svg class="a" style="left:37.4px;top:401.6px;" width="11" height="13" viewBox="0 0 11 13"><path d="M0.35 2.6 A5 2.3 0 0 1 10.35 2.6 V9.3 A5 2.3 0 0 1 0.35 9.3 Z" fill="#404040"/><ellipse cx="5.35" cy="2.75" rx="3.75" ry="1.05" fill="#fff"/></svg>
<div class="a" style="left:52.9px;top:404px;width:8px;height:8px;background:#33CC33;"></div>
<div class="t" style="left:68.70px;top:399px;font-size:9.6px;font-family:'Liberation Sans',sans-serif;color:#363636;letter-spacing:-0.303px;">performance_schema</div>
<svg class="a" style="left:25.5px;top:419.5px;" width="4" height="7" viewBox="0 0 4 7"><path d="M0 0 L3.5 3.5 L0 7 Z" fill="#6E6E6E"/></svg>
<svg class="a" style="left:37.4px;top:415.6px;" width="11" height="13" viewBox="0 0 11 13"><path d="M0.35 2.6 A5 2.3 0 0 1 10.35 2.6 V9.3 A5 2.3 0 0 1 0.35 9.3 Z" fill="#404040"/><ellipse cx="5.35" cy="2.75" rx="3.75" ry="1.05" fill="#fff"/></svg>
<div class="a" style="left:52.9px;top:418px;width:8px;height:8px;background:#33CC33;"></div>
<div class="t" style="left:68.70px;top:413px;font-size:9.6px;font-family:'Liberation Sans',sans-serif;color:#363636;letter-spacing:-0.015px;">pets</div>
<svg class="a" style="left:25.5px;top:434.5px;" width="4" height="7" viewBox="0 0 4 7"><path d="M0 0 L3.5 3.5 L0 7 Z" fill="#6E6E6E"/></svg>
<svg class="a" style="left:37.4px;top:430.6px;" width="11" height="13" viewBox="0 0 11 13"><path d="M0.35 2.6 A5 2.3 0 0 1 10.35 2.6 V9.3 A5 2.3 0 0 1 0.35 9.3 Z" fill="#404040"/><ellipse cx="5.35" cy="2.75" rx="3.75" ry="1.05" fill="#fff"/></svg>
<div class="a" style="left:52.9px;top:433px;width:8px;height:8px;background:#33CC33;"></div>
<div class="t" style="left:68.70px;top:428px;font-size:9.6px;font-family:'Liberation Sans',sans-serif;color:#363636;letter-spacing:-0.511px;">sakila</div>
<svg class="a" style="left:25.5px;top:448.5px;" width="4" height="7" viewBox="0 0 4 7"><path d="M0 0 L3.5 3.5 L0 7 Z" fill="#6E6E6E"/></svg>
<svg class="a" style="left:37.4px;top:444.6px;" width="11" height="13" viewBox="0 0 11 13"><path d="M0.35 2.6 A5 2.3 0 0 1 10.35 2.6 V9.3 A5 2.3 0 0 1 0.35 9.3 Z" fill="#404040"/><ellipse cx="5.35" cy="2.75" rx="3.75" ry="1.05" fill="#fff"/></svg>
<div class="a" style="left:52.9px;top:447px;width:8px;height:8px;background:#33CC33;"></div>
<div class="t" style="left:68.70px;top:442px;font-size:9.6px;font-family:'Liberation Sans',sans-serif;color:#363636;letter-spacing:-0.500px;">sys</div>
<svg class="a" style="left:25.5px;top:463.5px;" width="4" height="7" viewBox="0 0 4 7"><path d="M0 0 L3.5 3.5 L0 7 Z" fill="#6E6E6E"/></svg>
<svg class="a" style="left:37.4px;top:459.6px;" width="11" height="13" viewBox="0 0 11 13"><path d="M0.35 2.6 A5 2.3 0 0 1 10.35 2.6 V9.3 A5 2.3 0 0 1 0.35 9.3 Z" fill="#404040"/><ellipse cx="5.35" cy="2.75" rx="3.75" ry="1.05" fill="#fff"/></svg>
<div class="a" style="left:52.9px;top:462px;width:8px;height:8px;background:#33CC33;"></div>
<div class="t" style="left:68.72px;top:457px;font-size:9.6px;font-family:'Liberation Sans',sans-serif;color:#363636;letter-spacing:-0.141px;">world</div>
<svg class="a" style="left:9px;top:477.5px;" width="4" height="7" viewBox="0 0 4 7"><path d="M0 0 L3.5 3.5 L0 7 Z" fill="#6E6E6E"/></svg>
<svg class="a" style="left:23.3px;top:474px;" width="7" height="12" viewBox="0 0 7 12"><rect x="1" y="0" width="1.5" height="2.8" fill="#222"/><rect x="4.5" y="0" width="1.5" height="2.8" fill="#222"/><rect x="0" y="2.8" width="7" height="1.2" fill="#222"/><path d="M0.6 4 H6.4 V6.6 L5 7.8 H2 L0.6 6.6 Z" fill="#222"/><rect x="2.6" y="7.5" width="1.9" height="4.3" fill="#222"/></svg>
<svg class="a" style="left:35.8px;top:475.7px;" width="9" height="9" viewBox="0 0 9 9"><circle cx="4.3" cy="4.2" r="4.2" fill="#F35A40"/></svg>
<div class="t" style="left:52.70px;top:471px;font-size:9.6px;font-family:'Liberation Sans',sans-serif;color:#363636;letter-spacing:-0.271px;">Production Server</div>
<svg class="a" style="left:268.9px;top:114.9px;" width="11" height="11" viewBox="0 0 11 11"><path d="M4.065 1.236 A4 4 0 1 0 8.964 6.135" fill="none" stroke="#7A7A7A" stroke-width="2.1"/><path d="M6.135 1.236 A4 4 0 0 1 8.859 3.732" fill="none" stroke="#7A7A7A" stroke-width="2.1"/><path d="M5.3 2.8 V6.4" stroke="#7A7A7A" stroke-width="1.2"/></svg>
<div class="t" style="left:282.80px;top:111px;font-size:9.6px;font-family:'Liberation Sans',sans-serif;color:#363636;letter-spacing:-0.207px;">Start Page</div>
<div class="a" style="left:351.5px;top:111px;width:102.5px;height:19px;background:#007ACC;"></div>
<svg class="a" style="left:362px;top:112.5px;" width="14" height="14" viewBox="0 0 14 14"><path d="M3.1 9.5 V3.3 Q3.1 2.3 4.1 2.3 H11.8 Q12.9 2.3 12.9 3.2 Q12.9 4.1 11.8 4.1 H9.8 V10.4 Q9.8 11.6 8.6 11.6 H2 Q1 11.6 1 10.6 Q1 9.6 2 9.6 H3.1 Z" fill="#F0F0F0" stroke="#8CC0EC" stroke-width="2.8"/><path d="M3.1 9.5 V3.3 Q3.1 2.3 4.1 2.3 H11.8 Q12.9 2.3 12.9 3.2 Q12.9 4.1 11.8 4.1 H9.8 V10.4 Q9.8 11.6 8.6 11.6 H2 Q1 11.6 1 10.6 Q1 9.6 2 9.6 H3.1 Z" fill="#F0F0F0" stroke="#2A2A2A" stroke-width="1.6"/></svg>
<div class="a" style="left:378px;top:116px;width:9.2px;height:9.2px;background:#33CC33;box-sizing:border-box;border:1px solid #C8F0C8;"></div>
<div class="t" style="left:391.60px;top:111px;font-size:9.6px;font-family:'Liberation Sans',sans-serif;color:#FFFFFF;letter-spacing:-0.312px;">SQL.sql*</div>
<svg class="a" style="left:439px;top:117px;" width="7" height="7" viewBox="0 0 7 7"><path d="M0.5 0.5 L6.5 6.5 M6.5 0.5 L0.5 6.5" stroke="#fff" stroke-width="1.3"/></svg>
<svg class="a" style="left:1009.8px;top:118.2px;" width="6.6" height="3.9" viewBox="0 0 6.6 3.9"><path d="M0 0 H6.6 L3.3 3.9 Z" fill="#1e1e1e"/></svg>
<div class="a" style="left:257px;top:130px;width:764px;height:2px;background:#007ACC;"></div>
<div class="a" style="left:257px;top:132px;width:1px;height:402px;background:#CCCEDB;"></div>
<div class="a" style="left:258px;top:134px;width:379px;height:17px;background:#FFFFFF;box-sizing:border-box;border:1px solid #CCCEDB;"></div>
<svg class="a" style="left:627px;top:141.5px;" width="5" height="3" viewBox="0 0 5 3"><path d="M0 0 H5 L2.5 3 Z" fill="#333"/></svg>
<div class="a" style="left:642px;top:134px;width:378.5px;height:17px;background:#FFFFFF;box-sizing:border-box;border:1px solid #CCCEDB;"></div>
<svg class="a" style="left:1011px;top:141.5px;" width="5" height="3" viewBox="0 0 5 3"><path d="M0 0 H5 L2.5 3 Z" fill="#333"/></svg>
<div class="a" style="left:258px;top:152px;width:748px;height:341px;background:#FFFFFF;"></div>
<div class="a" style="left:258px;top:152px;width:17px;height:341px;background:#F0F0F3;"></div>
<div class="a" style="left:275px;top:152px;width:3px;height:102.5px;background:#FFFF00;"></div>
<div class="a" style="left:289px;top:242px;width:717px;height:12.7px;background:#E8E8FA;"></div>
<svg class="a" style="left:278px;top:181px;" width="8" height="36" viewBox="0 0 8 36"><rect x="0.5" y="0.5" width="7" height="6.8" fill="#fff" stroke="#BDBDBD" stroke-width="1"/><path d="M2 3.9 H6" stroke="#999" stroke-width="1"/><path d="M4 7.3 V35 H8" fill="none" stroke="#D4D4D4" stroke-width="1"/></svg>
<svg class="a" style="left:278px;top:232px;" width="8" height="23" viewBox="0 0 8 23"><rect x="0.5" y="0.5" width="7" height="6.8" fill="#fff" stroke="#BDBDBD" stroke-width="1"/><path d="M2 3.9 H6" stroke="#999" stroke-width="1"/><path d="M4 7.3 V22.3 H8" fill="none" stroke="#D4D4D4" stroke-width="1"/></svg>
<div class="t" style="left:289px;top:151px;font-family:'Liberation Mono',monospace;font-size:10px;"><span style="color:#0000FF">USE</span> <span style="color:#008080">lahmansbaseballdb</span><span style="color:#808080">;</span></div>
<div class="t" style="left:289px;top:177px;font-family:'Liberation Mono',monospace;font-size:10px;"><span style="color:#0000FF">ALTER</span> <span style="color:#0000FF">TABLE</span> <span style="color:#008080">awardsplayers</span></div>
<div class="t" style="left:289px;top:190px;font-family:'Liberation Mono',monospace;font-size:10px;"><span style="color:#0000FF">ADD</span> <span style="color:#0000FF">INDEX</span> <span style="color:#008080">IX_AwardsPlayers1</span> <span style="color:#808080">(</span><span style="color:#008080">awardID</span><span style="color:#808080">)</span><span style="color:#808080">,</span></div>
<div class="t" style="left:289px;top:202px;font-family:'Liberation Mono',monospace;font-size:10px;"><span style="color:#0000FF">ADD</span> <span style="color:#0000FF">INDEX</span> <span style="color:#008080">IX_AwardsPlayers2</span> <span style="color:#808080">(</span><span style="color:#008080">playerID</span><span style="color:#808080">)</span><span style="color:#808080">;</span></div>
<div class="t" style="left:289px;top:228px;font-family:'Liberation Mono',monospace;font-size:10px;"><span style="color:#0000FF">ALTER</span> <span style="color:#0000FF">TABLE</span> <span style="color:#008080">people</span></div>
<div class="t" style="left:289px;top:241px;font-family:'Liberation Mono',monospace;font-size:10px;"><span style="color:#0000FF">ADD</span> <span style="color:#0000FF">INDEX</span> <span style="color:#008080">IX_People1</span> <span style="color:#808080">(</span><span style="color:#008080">playerID</span><span style="color:#808080">)</span><span style="color:#808080">;</span></div>
<div class="a" style="left:480.6px;top:242px;width:1.5px;height:12.5px;background:#000;"></div>
<div class="a" style="left:1006px;top:152px;width:15.5px;height:341px;background:#E6E6EA;"></div>
<div class="a" style="left:1006px;top:152px;width:14px;height:13px;background:#F5F5F7;box-sizing:border-box;border-left:1px solid #DADAE2;border-bottom:1px solid #DADAE2;"></div>
<svg class="a" style="left:1008px;top:154px;" width="10" height="10" viewBox="0 0 10 10"><path d="M5 0.5 L7.5 3 H2.5 Z" fill="#333"/><rect x="1" y="4.3" width="8" height="1.6" fill="#333"/><path d="M2.5 7 H7.5 L5 9.5 Z" fill="#333"/></svg>
<svg class="a" style="left:1010px;top:170.5px;" width="7" height="4.5" viewBox="0 0 7 4.5"><path d="M3.5 0 L7 4.2 H0 Z" fill="#9B9B9B"/></svg>
<div class="a" style="left:1009.8px;top:180.6px;width:7.2px;height:305px;background:#B8B8BB;"></div>
<svg class="a" style="left:1010px;top:485.5px;" width="7" height="3" viewBox="0 0 7 3"><path d="M0 0 H7 L3.5 3 Z" fill="#9B9B9B"/></svg>
<div class="a" style="left:258px;top:493px;width:748px;height:14px;background:#E8E8EC;"></div>
<div class="a" style="left:258px;top:493px;width:17px;height:14px;background:#F5F5F7;"></div>
<svg class="a" style="left:261.5px;top:496px;" width="10" height="8" viewBox="0 0 10 8"><path d="M0 4 L2.5 1.5 V6.5 Z" fill="#333"/><rect x="4.3" y="0" width="1.5" height="8" fill="#333"/><path d="M10 4 L7.5 1.5 V6.5 Z" fill="#333"/></svg>
<svg class="a" style="left:279.5px;top:496.5px;" width="4" height="7" viewBox="0 0 4 7"><path d="M4 0 V7 L0 3.5 Z" fill="#A8A8A8"/></svg>
<svg class="a" style="left:996.5px;top:496.5px;" width="4.5" height="7" viewBox="0 0 4.5 7"><path d="M0 0 V7 L4.5 3.5 Z" fill="#A8A8A8"/></svg>
<div class="a" style="left:1006px;top:493px;width:14px;height:14px;background:#EEEEF2;"></div>
<div class="a" style="left:258px;top:507px;width:762px;height:26px;background:#EEEEF2;"></div>
<div class="a" style="left:257px;top:533px;width:764px;height:1px;background:#CCCEDB;"></div>
<div class="a" style="left:259.3px;top:509px;width:47.5px;height:21.8px;background:#F0F0F4;box-sizing:border-box;border:1px solid #3D9BE0;"></div>
<svg class="a" style="left:263.8px;top:512.6px;" width="14" height="14" viewBox="0 0 14 14"><g transform="scale(0.93,0.97)"><path d="M3.1 9.5 V3.3 Q3.1 2.3 4.1 2.3 H11.8 Q12.9 2.3 12.9 3.2 Q12.9 4.1 11.8 4.1 H9.8 V10.4 Q9.8 11.6 8.6 11.6 H2 Q1 11.6 1 10.6 Q1 9.6 2 9.6 H3.1 Z" fill="#EEEEF2" stroke="#2A2A2A" stroke-width="1.55"/></g></svg>
<div class="t" style="left:281.40px;top:510px;font-size:11.2px;font-family:'Liberation Sans',sans-serif;color:#3A3A3A;font-weight:bold;letter-spacing:-0.233px;">Text</div>
<svg class="a" style="left:313px;top:514.5px;" width="11" height="10.5" viewBox="0 0 11 10.5"><rect x="0.6" y="0.6" width="9.8" height="9.3" fill="#E4E4E4" stroke="#4A4A4A" stroke-width="1.2"/><path d="M1 3.9 H10 M1 6.7 H10" stroke="#666" stroke-width="0.9" stroke-dasharray="1.4 0.9"/><path d="M3.9 1 V9.5 M7 1 V9.5" stroke="#666" stroke-width="0.9"/></svg>
<div class="t" style="left:328.80px;top:510px;font-size:11.5px;font-family:'Liberation Sans',sans-serif;color:#363636;letter-spacing:-0.133px;">Data</div>
<svg class="a" style="left:362.5px;top:514.5px;" width="12" height="10.5" viewBox="0 0 12 10.5"><rect x="0.6" y="0.6" width="10.8" height="9.3" fill="#444" stroke="#555" stroke-width="1.2"/><rect x="2" y="2" width="8" height="6.5" fill="#666"/><path d="M2 7.5 L4.5 4.5 L6.5 6.5 L8.5 3.5 L10 5" fill="none" stroke="#eee" stroke-width="0.9"/></svg>
<div class="t" style="left:379.60px;top:510px;font-size:11.5px;font-family:'Liberation Sans',sans-serif;color:#363636;letter-spacing:-0.119px;">Profiler</div>
<div class="a" style="left:422.5px;top:511px;width:1px;height:18px;background:#CCCEDB;"></div>
<svg class="a" style="left:432.5px;top:516px;" width="9" height="9" viewBox="0 0 9 9"><path d="M4.5 0 V8.5 M0 4.25 H9" stroke="#1e1e1e" stroke-width="1.6"/></svg>
<div class="a" style="left:510.3px;top:511px;width:1px;height:18px;background:#CCCEDB;"></div>
<div class="a" style="left:521.2px;top:517.3px;width:6.5px;height:6.3px;background:#33CC33;"></div>
<div class="t" style="left:533.70px;top:510px;font-size:11.5px;font-family:'Liberation Sans',sans-serif;color:#363636;letter-spacing:0.164px;">Development</div>
<div class="a" style="left:610.8px;top:511px;width:1px;height:18px;background:#CCCEDB;"></div>
<svg class="a" style="left:618.5px;top:514px;" width="12.5" height="12.5" viewBox="0 0 12.5 12.5"><circle cx="6.1" cy="6.1" r="6" fill="#2E9A2E"/><path d="M3 6.3 L5.2 8.5 L9.3 4" fill="none" stroke="#fff" stroke-width="1.8"/></svg>
<div class="t" style="left:635.70px;top:510px;font-size:11.5px;font-family:'Liberation Sans',sans-serif;color:#363636;letter-spacing:-0.027px;">Query executed successfully.</div>
<div class="a" style="left:790.7px;top:511px;width:1px;height:18px;background:#CCCEDB;"></div>
<div class="t" style="left:797.60px;top:510px;font-size:11.5px;font-family:'Liberation Sans',sans-serif;color:#363636;letter-spacing:0.065px;">0:00:00.104</div>
<div class="a" style="left:867px;top:511px;width:1px;height:18px;background:#CCCEDB;"></div>
<div class="t" style="left:873.40px;top:510px;font-size:11.5px;font-family:'Liberation Sans',sans-serif;color:#363636;letter-spacing:-0.017px;">localhost (8.0)</div>
<div class="a" style="left:952.9px;top:511px;width:1px;height:18px;background:#CCCEDB;"></div>
<div class="t" style="left:959.40px;top:510px;font-size:11.5px;font-family:'Liberation Sans',sans-serif;color:#363636;letter-spacing:0.562px;">root</div>
<div class="a" style="left:985.9px;top:509px;width:21.6px;height:21.8px;background:#F0F0F4;box-sizing:border-box;border:1px solid #3D9BE0;"></div>
<div class="a" style="left:991.6px;top:514.6px;width:11px;height:10.3px;background:none;box-sizing:border-box;border:1.3px solid #444;"></div>
<svg class="a" style="left:1012px;top:519.5px;" width="7" height="8" viewBox="0 0 7 8"><rect x="0" y="0" width="7" height="1" fill="#555"/><rect x="0" y="2.5" width="7" height="1" fill="#555"/><path d="M0.5 4.5 H6.5 L3.5 7.5 Z" fill="#555"/></svg>
<div class="a" style="left:1px;top:535px;width:1022px;height:26px;background:#007ACC;"></div>
<div class="t" style="left:11.60px;top:539px;font-size:9.6px;font-family:'Liberation Sans',sans-serif;color:#FFFFFF;letter-spacing:-0.388px;">Ready</div>
<div class="t" style="left:842.00px;top:538.5px;font-size:11.5px;font-family:'Liberation Sans',sans-serif;color:#FFFFFF;letter-spacing:-0.026px;">Ln 8</div>
<div class="t" style="left:878.80px;top:538.5px;font-size:11.5px;font-family:'Liberation Sans',sans-serif;color:#FFFFFF;letter-spacing:-0.089px;">Col 33</div>
<div class="t" style="left:926.60px;top:538.5px;font-size:11.5px;font-family:'Liberation Sans',sans-serif;color:#FFFFFF;letter-spacing:-0.071px;">Ch 33</div>
<svg class="a" style="left:1012px;top:549px;" width="10" height="10" viewBox="0 0 10 10"><g fill="#7FB8E6"><rect x="7" y="1" width="1.5" height="1.5"/><rect x="4.5" y="3.5" width="1.5" height="1.5"/><rect x="7" y="3.5" width="1.5" height="1.5"/><rect x="2" y="6" width="1.5" height="1.5"/><rect x="4.5" y="6" width="1.5" height="1.5"/><rect x="7" y="6" width="1.5" height="1.5"/></g></svg>
</body></html>
